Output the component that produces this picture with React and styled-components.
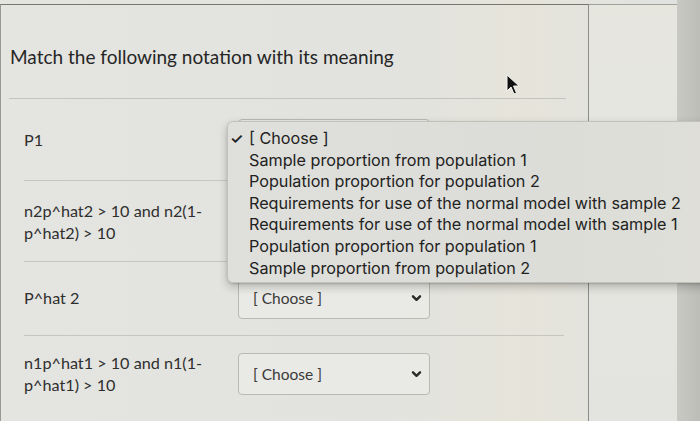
import React from 'react'
import styled, { createGlobalStyle } from 'styled-components'

const GlobalStyle = createGlobalStyle`
  html, body {
    margin: 0;
    padding: 0;
    background: #deded9;
  }
  body {
    font-family: Lato, "Open Sans", sans-serif;
    color: #2b2b2b;
  }
`

const OPTIONS = [
  'Sample proportion from population 1',
  'Population proportion for population 2',
  'Requirements for use of the normal model with sample 2',
  'Requirements for use of the normal model with sample 1',
  'Population proportion for population 1',
  'Sample proportion from population 2',
]

// the first two selects sit under the open menu
const ROWS = [
  { label: ['P1'], covered: true },
  { label: ['n2p^hat2 > 10 and n2(1-', 'p^hat2) > 10'], covered: true },
  { label: ['P^hat 2'] },
  { label: ['n1p^hat1 > 10 and n1(1-', 'p^hat1) > 10'] },
]

const App = () => {
  return (
    <Screen>
      <GlobalStyle />
      <Card>
        <Header>Match the following notation with its meaning</Header>
        <Rows>
          {ROWS.map((row, i) => (
            <Row key={i}>
              <Label>
                {row.label.map((l) => (
                  <div key={l}>{l}</div>
                ))}
              </Label>
              <Select $covered={row.covered}>
                <span>[ Choose ]</span>
                <Chevron viewBox="0 0 10 8">
                  <path d="M1.8 2 L5 5.2 L8.2 2" />
                </Chevron>
              </Select>
            </Row>
          ))}
        </Rows>
      </Card>
      <SideStrip />
      <Edge />

      <Popup>
        <Option>
          <Check>✓</Check>[ Choose ]
        </Option>
        {OPTIONS.map((o) => (
          <Option key={o}>{o}</Option>
        ))}
      </Popup>

      <Cursor viewBox="0 0 14 22">
        <path
          d="M1 1 L1 17 L5 13 L8 20 L10.5 19 L7.5 12 L13 12 Z"
          fill="#111"
          stroke="#f4f4f0"
          strokeWidth="1"
          strokeLinejoin="round"
        />
      </Cursor>
    </Screen>
  )
}

const Screen = styled.div`
  position: relative;
  width: 700px;
  height: 421px;
  overflow: hidden;
  display: flex;
  padding-top: 4px;
  box-sizing: border-box;
  background: linear-gradient(90deg, #e4e4e0 0%, #e2e3df 55%, #e6e4da 75%, #dfe2e2 100%);
`

const Card = styled.section`
  width: 589px;
  flex-shrink: 0;
  border-top: 1px solid #77776f;
  border-left: 1px solid #9a9a94;
  border-right: 1px solid #8c8c86;
  box-sizing: border-box;
  padding-left: 8px;
`

const SideStrip = styled.div`
  width: 88px;
  flex-shrink: 0;
  border-top: 1px solid #a3a39d;
  background: linear-gradient(180deg, #e6e6df 0%, #e3e4e0 100%);
`

const Edge = styled.div`
  flex: 1;
  background: linear-gradient(90deg, #c9c9c4, #bdbdb8);
  margin-top: -4px;
`

const Header = styled.h2`
  margin: 0;
  width: 556px;
  padding: 40px 0 29px 1px;
  font-weight: 400;
  font-size: 19px;
  line-height: 24px;
  color: #262626;
  border-bottom: 1px solid #c4c4be;
`

const Rows = styled.div`
  margin-left: 15px;
  width: 540px;
`

const Row = styled.div`
  display: grid;
  grid-template-columns: 214px 192px;
  align-items: center;
  padding: 19px 0 17px;
  border-bottom: 1px solid #c6c6c0;

  &:nth-child(1) {
    padding-top: 20px;
    padding-bottom: 19px;
  }

  &:nth-child(3) {
    padding-top: 15px;
    padding-bottom: 16px;
  }

  &:last-child {
    padding-top: 16px;
    border-bottom: none;
  }
`

const Label = styled.div`
  font-size: 16.2px;
  line-height: 22px;
  color: #2e2e2e;
`

const Select = styled.div`
  height: 42px;
  box-sizing: border-box;
  border: 1px solid #b9b9b3;
  border-radius: 4px;
  background: #e9e9e5;
  display: flex;
  align-items: center;
  justify-content: space-between;
  padding: 0 7px 0 14px;
  font-size: 15.5px;
  color: #3a3a3a;

  span {
    visibility: ${(p) => (p.$covered ? 'hidden' : 'visible')};
  }
`

const Chevron = styled.svg`
  width: 11px;
  height: 9px;
  fill: none;
  stroke: #2a2a2a;
  stroke-width: 2.2;
  stroke-linecap: round;
  stroke-linejoin: round;
`

const Popup = styled.ul`
  position: absolute;
  left: 227px;
  top: 121px;
  width: 500px;
  height: 162px;
  margin: 0;
  padding: 6px 0 0 21px;
  box-sizing: border-box;
  list-style: none;
  background: linear-gradient(90deg, #dfdfdb 0%, #dcddd8 60%, #dfdfd8 100%);
  border: 1px solid #c2c2bc;
  border-radius: 6px;
  box-shadow: 0 4px 10px rgba(0, 0, 0, 0.22), 0 1px 2px rgba(0, 0, 0, 0.15);
  font-family: Inter, "Liberation Sans", sans-serif;
  font-size: 16.2px;
  color: #222;
`

const Option = styled.li`
  position: relative;
  height: 21.6px;
  line-height: 21.6px;
  white-space: nowrap;
`

const Check = styled.span`
  position: absolute;
  left: -19px;
  font-size: 15px;
  font-weight: 600;
`

const Cursor = styled.svg`
  position: absolute;
  left: 506px;
  top: 74px;
  width: 14px;
  height: 22px;
`

export default App
